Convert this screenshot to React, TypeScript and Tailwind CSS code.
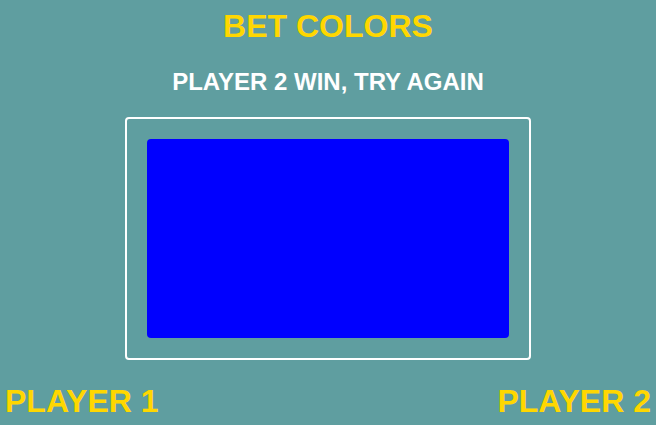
import React from 'react';

export default function App() {
  return (
    <div className="w-full h-[425px] bg-[#5f9ea0] flex flex-col items-center font-['Liberation_Sans',Arial,sans-serif] font-bold overflow-hidden">
      <h1 className="mt-[8px] text-[32px] leading-[37px] text-[#ffd700]">BET COLORS</h1>
      <h2 className="mt-[23px] text-[24px] leading-[28px] text-white">PLAYER 2 WIN, TRY AGAIN</h2>

      {/* board with the current colour */}
      <div className="mt-[21px] border-2 border-white rounded-[4px] p-[20px]">
        <div className="w-[362px] h-[199px] bg-[#0000ff] rounded-[4px]" />
      </div>

      <div className="mt-[23px] w-full px-[5px] flex justify-between text-[32px] leading-[37px] text-[#ffd700]">
        <span>PLAYER 1</span>
        <span>PLAYER 2</span>
      </div>
    </div>
  );
}
